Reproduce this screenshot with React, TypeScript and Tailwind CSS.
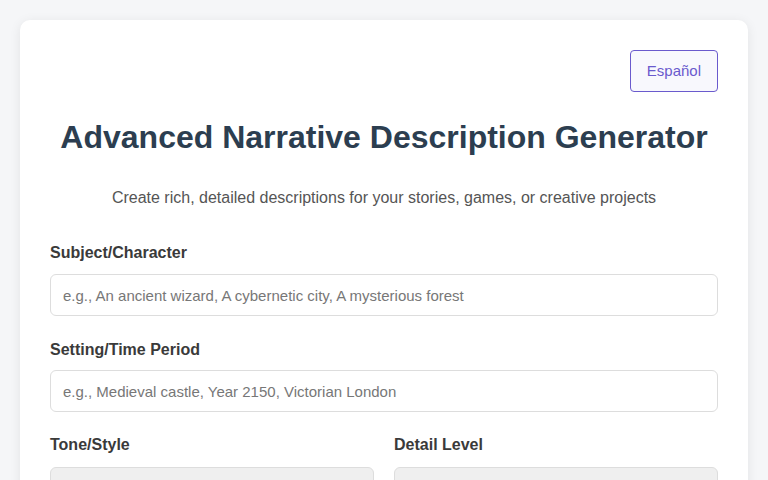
import React from "react";

export default function App() {
  return (
    <div
      className="min-h-screen bg-[#f5f6f8] p-5"
      style={{ fontFamily: '"Liberation Sans", Arial, sans-serif' }}
    >
      <div className="rounded-[10px] bg-white p-[30px] shadow-[0_2px_12px_rgba(0,0,0,0.08)]">
        <div className="flex justify-end">
          <button className="h-[42px] rounded-[4px] border border-[#6a5acd] bg-[#f8f8fd] px-4 text-[15px] text-[#6a5acd]">
            Español
          </button>
        </div>
        <h1 className="mt-[25px] text-center text-[32px] font-bold leading-[40px] text-[#2c3e50]">
          Advanced Narrative Description Generator
        </h1>
        <p className="mt-[29px] text-center text-[16px] leading-[24px] text-[#555]">
          Create rich, detailed descriptions for your stories, games, or creative projects
        </p>

        <div className="mt-[31px]">
          <label className="mb-[9px] block text-[16px] font-bold leading-[24px] text-[#3a3a3a]">
            Subject/Character
          </label>
          <input
            className="h-[42px] w-full rounded-[6px] border border-[#ddd] px-3 text-[15px] text-[#333] placeholder:text-[#777] outline-none"
            placeholder="e.g., An ancient wizard, A cybernetic city, A mysterious forest"
          />
        </div>

        <div className="mt-[22px]">
          <label className="mb-[8px] block text-[16px] font-bold leading-[24px] text-[#3a3a3a]">
            Setting/Time Period
          </label>
          <input
            className="h-[42px] w-full rounded-[6px] border border-[#ddd] px-3 text-[15px] text-[#333] placeholder:text-[#777] outline-none"
            placeholder="e.g., Medieval castle, Year 2150, Victorian London"
          />
        </div>

        <div className="mt-[21px] grid grid-cols-2 gap-5">
          <div>
            <label className="mb-[10px] block text-[16px] font-bold leading-[24px] text-[#3a3a3a]">
              Tone/Style
            </label>
            <div className="h-[42px] w-full rounded-[6px] border border-[#ddd] bg-[#efefef]" />
          </div>
          <div>
            <label className="mb-[10px] block text-[16px] font-bold leading-[24px] text-[#3a3a3a]">
              Detail Level
            </label>
            <div className="h-[42px] w-full rounded-[6px] border border-[#ddd] bg-[#efefef]" />
          </div>
        </div>
      </div>
    </div>
  );
}
